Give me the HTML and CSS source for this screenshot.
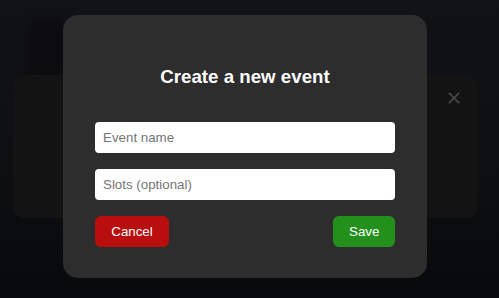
FILE: index.html
```html
<!DOCTYPE html>
<html>
<head>
<meta charset="utf-8">
<link rel="stylesheet" href="styles.css">
</head>
<body>
<div class="page">
  <div class="shade"></div>
  <div class="card"></div>
</div>
<div class="overlay">
  <div class="modal">
    <h3 class="title">Create a new event</h3>
    <form class="form">
      <input class="field" type="text" placeholder="Event name">
      <input class="field" type="text" placeholder="Slots (optional)">
      <div class="actions">
        <button type="button" class="btn btn-cancel">Cancel</button>
        <button type="button" class="btn btn-save">Save</button>
      </div>
    </form>
  </div>
  <button type="button" class="close" aria-label="Close">
    <svg width="12" height="12" viewBox="0 0 12 12"><path d="M0.8 0.8 L11.2 11.2 M11.2 0.8 L0.8 11.2" stroke="#4c4c4c" stroke-width="1.6" fill="none"/></svg>
  </button>
</div>
</body>
</html>
```
FILE: styles.css
```css
html, body {
  margin: 0;
  padding: 0;
}
body {
  width: 499px;
  height: 298px;
  overflow: hidden;
  position: relative;
  background: linear-gradient(180deg, #111216 0%, #0e0f11 55%, #08090a 100%);
  font-family: "Liberation Sans", Arial, sans-serif;
}
.page {
  position: relative;
  padding: 75px 21px 0 13px;
}
.shade {
  position: absolute;
  left: 28px;
  top: 18px;
  width: 40px;
  height: 60px;
  border-radius: 14px 14px 0 0;
  background: #0c0c0e;
  filter: blur(4px);
}
.card {
  position: relative;
  height: 143px;
  border-radius: 12px;
  background: #131313;
}
.overlay {
  position: absolute;
  inset: 0;
}
.modal {
  margin: 15px 0 0 63px;
  width: 364px;
  height: 263px;
  box-sizing: border-box;
  padding: 0 32px;
  border-radius: 15px;
  background: #2d2d2d;
  display: flex;
  flex-direction: column;
}
.title {
  margin: 51px 0 35px;
  font-size: 18.72px;
  font-weight: bold;
  line-height: 21px;
  color: #ffffff;
  text-align: center;
}
.form {
  display: flex;
  flex-direction: column;
  gap: 16px;
}
.field {
  box-sizing: border-box;
  width: 300px;
  height: 31px;
  margin: 0;
  padding: 0 8px;
  border: none;
  border-radius: 4px;
  background: #ffffff;
  font-family: "Liberation Sans", Arial, sans-serif;
  font-size: 13.333px;
  color: #222;
  outline: none;
}
.field::placeholder {
  color: #757575;
}
.actions {
  display: flex;
  justify-content: space-between;
}
.btn {
  height: 31px;
  margin: 0;
  padding: 0 16px;
  border: none;
  border-radius: 6px;
  font-family: "Liberation Sans", Arial, sans-serif;
  font-size: 13.333px;
  color: #ffffff;
  cursor: pointer;
}
.btn-cancel {
  width: 74px;
  background: #b90e0e;
}
.btn-save {
  width: 62px;
  background: #22901b;
}
.close {
  position: absolute;
  left: 448px;
  top: 92px;
  width: 12px;
  height: 12px;
  padding: 0;
  border: none;
  background: none;
  display: block;
}
.close svg {
  display: block;
}
```
